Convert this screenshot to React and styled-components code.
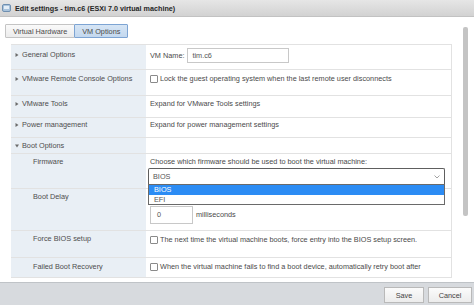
import React from 'react';
import styled, { createGlobalStyle } from 'styled-components';

const GlobalStyle = createGlobalStyle`
  html, body {
    margin: 0;
    padding: 0;
    background: #ffffff;
  }
  body {
    font-family: 'Liberation Sans', Arial, sans-serif;
    color: #3a3a3a;
  }
`;

const Window = styled.div`
  width: 474px;
  height: 305px;
  display: flex;
  flex-direction: column;
  overflow: hidden;
  background: #ffffff;
`;

const TitleBar = styled.div`
  height: 16px;
  flex-shrink: 0;
  display: flex;
  align-items: center;
  gap: 4px;
  padding-left: 2px;
  background: linear-gradient(#e6e6e6, #d2d2d2);
  border-bottom: 1px solid #c2c2c2;
`;

const Title = styled.div`
  font-size: 7.2px;
  font-weight: bold;
  color: #262626;
`;

const Body = styled.div`
  flex: 1;
  display: flex;
  min-height: 0;
`;

const Content = styled.div`
  flex: 1;
  padding: 7px 0 0 5px;
  display: flex;
  flex-direction: column;
  min-width: 0;
`;

const TabRow = styled.div`
  display: flex;
  height: 14px;
`;

const Tab = styled.div`
  height: 12px;
  padding: 0 7px;
  display: flex;
  align-items: center;
  font-size: 7.3px;
  color: #4a4a4a;
  border: 1px solid ${(p) => (p.active ? '#7da4d3' : '#c4c4c4')};
  background: ${(p) =>
    p.active ? 'linear-gradient(#d6e5f5, #c3d8ef)' : 'linear-gradient(#fafafa, #ececec)'};
  border-radius: 1px;
  & + & {
    margin-left: -1px;
  }
`;

const Table = styled.div`
  margin: 6px 0 0 6px;
  width: 441px;
  border-top: 1px solid #e2e2e2;
  display: flex;
  flex-direction: column;
`;

const Row = styled.div`
  display: flex;
  height: ${(p) => p.h}px;
  flex-shrink: 0;
  border-bottom: 1px solid #e2e2e2;
  box-sizing: border-box;
`;

const LeftCell = styled.div`
  width: 135px;
  flex-shrink: 0;
  background: #e9eff5;
  box-sizing: border-box;
  padding: ${(p) => p.pt}px 0 0 ${(p) => (p.sub ? 22 : 4)}px;
  display: flex;
  align-items: flex-start;
  gap: 3px;
  font-size: 7.3px;
  line-height: 10px;
  color: #4d4d4d;
`;

const RightCell = styled.div`
  flex: 1;
  box-sizing: border-box;
  padding: ${(p) => p.pt}px 4px 0 4px;
  border-right: 1px solid #e2e2e2;
  font-size: 7.3px;
  line-height: 10px;
  color: #4a4a4a;
  display: flex;
  flex-direction: column;
  align-items: flex-start;
  min-width: 0;
  position: ${(p) => (p.raised ? 'relative' : 'static')};
  z-index: ${(p) => (p.raised ? 2 : 'auto')};
`;

const Arrow = styled.svg`
  width: 4px;
  height: 10px;
  flex-shrink: 0;
`;

const Inline = styled.div`
  display: flex;
  align-items: center;
  gap: ${(p) => p.gap || 2}px;
  white-space: nowrap;
  margin-top: ${(p) => p.mt || 0}px;
`;

const TextInput = styled.div`
  width: ${(p) => p.w}px;
  height: ${(p) => p.h}px;
  box-sizing: border-box;
  border: 1px solid #c8c8c8;
  background: #ffffff;
  display: flex;
  align-items: center;
  padding-left: ${(p) => p.pl || 4}px;
  color: #555;
`;

const Checkbox = styled.span`
  width: 8px;
  height: 8px;
  box-sizing: border-box;
  border: 1px solid #8a8a8a;
  border-radius: 1px;
  background: #fff;
  flex-shrink: 0;
`;

const SelectWrap = styled.div`
  position: relative;
  width: 297px;
  margin-top: 1px;
  margin-left: -2px;
`;

const Select = styled.div`
  height: 17px;
  box-sizing: border-box;
  border: 1px solid #5e5e5e;
  border-bottom-color: #9a9a9a;
  border-radius: 2px 2px 0 0;
  background: #fff;
  display: flex;
  align-items: center;
  justify-content: space-between;
  padding: 0 4px;
  color: #555;
`;

const OptionList = styled.div`
  position: absolute;
  top: 16px;
  left: 0;
  right: 0;
  border: 1px solid #6a6a6a;
  background: #fff;
  z-index: 2;
`;

const Option = styled.div`
  height: 9.5px;
  line-height: 9.5px;
  padding-left: 5px;
  color: ${(p) => (p.selected ? '#ffffff' : '#555')};
  background: ${(p) => (p.selected ? '#2c8cf4' : '#ffffff')};
`;

const Scrollbar = styled.div`
  width: 5px;
  flex-shrink: 0;
  padding: 10px 6px 0 1px;
`;

const Thumb = styled.div`
  width: 5px;
  height: 189px;
  background: #c4c4c4;
  border-radius: 2px;
`;

const Footer = styled.div`
  height: 22px;
  flex-shrink: 0;
  display: flex;
  align-items: center;
  justify-content: flex-end;
  gap: 4px;
  padding-right: 2px;
  background: #d7dade;
  border-top: 1px solid #bfc3c7;
`;

const Button = styled.div`
  width: ${(p) => p.w}px;
  height: 16px;
  box-sizing: border-box;
  border: 1px solid #b9b9b9;
  background: linear-gradient(#fbfbfb, #ececec);
  display: flex;
  align-items: center;
  justify-content: center;
  font-size: 7.3px;
  color: #444;
  margin-top: 2px;
`;

const RightArrow = () => (
  <Arrow viewBox="0 0 4 10">
    <path d="M0.5 3 L3.5 5 L0.5 7 Z" fill="#6b6b6b" />
  </Arrow>
);

const DownArrow = () => (
  <Arrow viewBox="0 0 4 10">
    <path d="M0 3.5 L4 3.5 L2 6.5 Z" fill="#6b6b6b" />
  </Arrow>
);

const VmIcon = () => (
  <svg width="9" height="10" viewBox="0 0 9 10">
    <rect x="0.5" y="1.5" width="8" height="7" rx="1.5" fill="#a9c3dc" stroke="#6f8fb0" />
    <rect x="2" y="3" width="5" height="3" fill="#e4eef7" />
  </svg>
);

const Chevron = () => (
  <svg width="6" height="4" viewBox="0 0 6 4">
    <path d="M0.5 0.5 L3 3 L5.5 0.5" fill="none" stroke="#8a8a8a" strokeWidth="0.8" />
  </svg>
);

const sections = [
  { label: 'VMware Tools', text: 'Expand for VMware Tools settings', h: 22, pt: 3 },
  { label: 'Power management', text: 'Expand for power management settings', h: 20, pt: 2 },
];

export default function App() {
  return (
    <Window>
      <GlobalStyle />
      <TitleBar>
        <VmIcon />
        <Title>Edit settings - tim.c6 (ESXi 7.0 virtual machine)</Title>
      </TitleBar>
      <Body>
        <Content>
          <TabRow>
            <Tab>Virtual Hardware</Tab>
            <Tab active>VM Options</Tab>
          </TabRow>
          <Table>
            <Row h={25}>
              <LeftCell pt={5}>
                <RightArrow />
                General Options
              </LeftCell>
              <RightCell pt={3}>
                <Inline gap={3}>
                  <span>VM Name:</span>
                  <TextInput w={102} h={15}>tim.c6</TextInput>
                </Inline>
              </RightCell>
            </Row>
            <Row h={26}>
              <LeftCell pt={4}>
                <RightArrow />
                VMware Remote Console Options
              </LeftCell>
              <RightCell pt={4}>
                <Inline>
                  <Checkbox />
                  Lock the guest operating system when the last remote user disconnects
                </Inline>
              </RightCell>
            </Row>
            {sections.map((s) => (
              <Row key={s.label} h={s.h}>
                <LeftCell pt={s.pt}>
                  <RightArrow />
                  {s.label}
                </LeftCell>
                <RightCell pt={s.pt}>{s.text}</RightCell>
              </Row>
            ))}
            <Row h={16}>
              <LeftCell pt={3}>
                <DownArrow />
                Boot Options
              </LeftCell>
              <RightCell pt={3} />
            </Row>
            <Row h={35}>
              <LeftCell sub pt={3}>Firmware</LeftCell>
              <RightCell pt={3} raised>
                <span>Choose which firmware should be used to boot the virtual machine:</span>
                <SelectWrap>
                  <Select>
                    BIOS
                    <Chevron />
                  </Select>
                  <OptionList>
                    <Option selected>BIOS</Option>
                    <Option>EFI</Option>
                  </OptionList>
                </SelectWrap>
              </RightCell>
            </Row>
            <Row h={42}>
              <LeftCell sub pt={3}>Boot Delay</LeftCell>
              <RightCell pt={17}>
                <Inline gap={3}>
                  <TextInput w={43} h={18} pl={6}>0</TextInput>
                  milliseconds
                </Inline>
              </RightCell>
            </Row>
            <Row h={27}>
              <LeftCell sub pt={3}>Force BIOS setup</LeftCell>
              <RightCell pt={4}>
                <Inline>
                  <Checkbox />
                  The next time the virtual machine boots, force entry into the BIOS setup screen.
                </Inline>
              </RightCell>
            </Row>
            <Row h={20}>
              <LeftCell sub pt={4}>Failed Boot Recovery</LeftCell>
              <RightCell pt={4}>
                <Inline>
                  <Checkbox />
                  When the virtual machine fails to find a boot device, automatically retry boot after
                </Inline>
              </RightCell>
            </Row>
          </Table>
        </Content>
        <Scrollbar>
          <Thumb />
        </Scrollbar>
      </Body>
      <Footer>
        <Button w={40}>Save</Button>
        <Button w={44}>Cancel</Button>
      </Footer>
    </Window>
  );
}
